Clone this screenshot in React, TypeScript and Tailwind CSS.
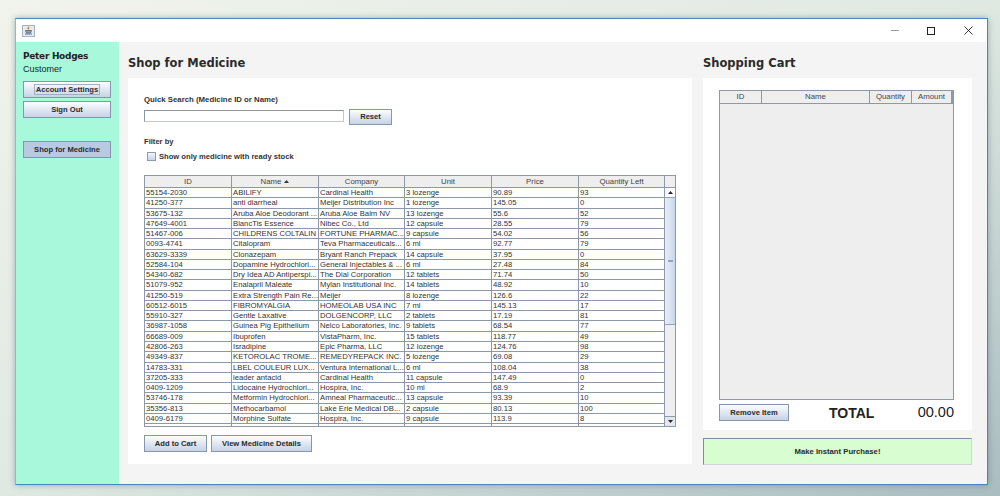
const rows = [
  ["55154-2030","ABILIFY","Cardinal Health","3 lozenge","90.89","93"],
  ["41250-377","anti diarrheal","Meijer Distribution Inc","1 lozenge","145.05","0"],
  ["53675-132","Aruba Aloe Deodorant ...","Aruba Aloe Balm NV","13 lozenge","55.6","52"],
  ["47649-4001","BlancTis Essence","Nibec Co., Ltd","12 capsule","28.55","79"],
  ["51467-006","CHILDRENS COLTALIN","FORTUNE PHARMAC...","9 capsule","54.02","56"],
  ["0093-4741","Citalopram","Teva Pharmaceuticals...","6 ml","92.77","79"],
  ["63629-3339","Clonazepam","Bryant Ranch Prepack","14 capsule","37.95","0"],
  ["52584-104","Dopamine Hydrochlori...","General Injectables & ...","6 ml","27.48","84"],
  ["54340-682","Dry Idea AD Antiperspi...","The Dial Corporation","12 tablets","71.74","50"],
  ["51079-952","Enalapril Maleate","Mylan Institutional Inc.","14 tablets","48.92","10"],
  ["41250-519","Extra Strength Pain Re...","Meijer","8 lozenge","126.6","22"],
  ["60512-6015","FIBROMYALGIA","HOMEOLAB USA INC","7 ml","145.13","17"],
  ["55910-327","Gentle Laxative","DOLGENCORP, LLC","2 tablets","17.19","81"],
  ["36987-1058","Guinea Pig Epithelium","Nelco Laboratories, Inc.","9 tablets","68.54","77"],
  ["66689-009","Ibuprofen","VistaPharm, Inc.","15 tablets","118.77","49"],
  ["42806-263","Isradipine","Epic Pharma, LLC","12 lozenge","124.76","98"],
  ["49349-837","KETOROLAC TROME...","REMEDYREPACK INC.","5 lozenge","69.08","29"],
  ["14783-331","LBEL COULEUR LUX...","Ventura International L...","6 ml","108.04","38"],
  ["37205-333","leader antacid","Cardinal Health","11 capsule","147.49","0"],
  ["0409-1209","Lidocaine Hydrochlori...","Hospira, Inc.","10 ml","68.9","2"],
  ["53746-178","Metformin Hydrochlori...","Amneal Pharmaceutic...","13 capsule","93.39","10"],
  ["35356-813","Methocarbamol","Lake Erie Medical DB...","2 capsule","80.13","100"],
  ["0409-6179","Morphine Sulfate","Hospira, Inc.","9 capsule","113.9","8"],
];
const widths = ["w-[87px]","w-[87px]","w-[86px]","w-[87px]","w-[87px]","w-[86px]"];
const heads = ["ID","Name","Company","Unit","Price","Quantity Left"];

function JButton({ label, className = "", focus = false }: { label: string; className?: string; focus?: boolean }) {
  return (
    <button className={`flex items-center justify-center border border-[#8497ad] bg-gradient-to-b from-[#fdfdff] to-[#c5d3e6] text-[7.6px] font-bold leading-none text-[#2a2a2a] ${className}`}>
      <span className={focus ? "border border-[#9fb0c6] px-[0.5px] py-[1px]" : ""}>{label}</span>
    </button>
  );
}

export default function App() {
  return (
    <div className="h-[496px] w-[1000px] overflow-hidden bg-gradient-to-br from-[#f1f4ec] via-[#dfe9e2] to-[#a9bcc0] pl-[15px] pt-[18px] font-['Liberation_Sans',sans-serif] text-[#333]">
      <div className="flex h-[467px] w-[973px] flex-col border border-[#4a84c4] border-l-[#7cc0d8] shadow-[0_0_6px_rgba(60,90,110,0.45)]">
        <div className="flex h-[23px] shrink-0 items-center justify-between bg-white pl-[6px]">
          <div className="flex h-[12px] w-[13px] items-center justify-center border border-[#a9b4c0] bg-[#e6e9ee]">
            <svg width="9" height="9" viewBox="0 0 9 9">
              <path d="M4.5 0.5v3M3 2.5l2-1" stroke="#d9822b" strokeWidth="1" fill="none" />
              <path d="M1.5 4.5h6l-1 2.5h-4zM1 8h7" stroke="#5f7590" strokeWidth="1" fill="#8ea2b8" />
            </svg>
          </div>
          <div className="flex items-center">
            <div className="flex w-[37px] justify-center"><div className="h-px w-[8px] bg-[#999]" /></div>
            <div className="flex w-[37px] justify-center pr-[2px]"><div className="h-[8px] w-[8px] border border-[#222]" /></div>
            <div className="flex w-[37px] justify-center pr-[1px]">
              <svg width="9" height="9" viewBox="0 0 9 9"><path d="M0.5 0.5l8 8M8.5 0.5l-8 8" stroke="#222" strokeWidth="0.9" /></svg>
            </div>
          </div>
        </div>
        <div className="flex min-h-0 flex-1">
          <aside className="w-[103px] shrink-0 bg-[#a8f9dc] pl-[7px] pt-[8px]">
            <div className="font-['DejaVu_Sans',sans-serif] text-[9px] font-bold leading-[12px] tracking-[-0.3px] text-[#222]">Peter Hodges</div>
            <div className="mt-[1px] text-[9px] leading-[12px] text-[#222]">Customer</div>
            <JButton label="Account Settings" focus className="mt-[6px] h-[17px] w-[88px]" />
            <JButton label="Sign Out" className="mt-[3px] h-[17px] w-[88px]" />
            <button className="mt-[23px] flex h-[17px] w-[88px] items-center justify-center border border-[#8497ad] bg-[#b8c9e2] text-[7.6px] font-bold leading-none text-[#2a2a2a]">Shop for Medicine</button>
          </aside>
          <main className="flex min-w-0 flex-1 bg-[#f4f4f4] pl-[9px]">
            <section className="w-[564px] shrink-0">
              <h1 className="mt-[14px] font-['DejaVu_Sans',sans-serif] text-[11.5px] font-bold leading-[15px] text-[#2b2b2b]">Shop for Medicine</h1>
              <div className="mt-[7px] h-[386px] bg-white pl-[16px] pt-[17px]">
                <div className="text-[7.8px] font-bold leading-[9px] text-[#333]">Quick Search (Medicine ID or Name)</div>
                <div className="mt-[5px] flex items-start gap-[5px]">
                  <div className="mt-[1px] h-[12px] w-[200px] border border-[#c3c9d0] border-l-[#8b95a3] border-t-[#8b95a3] bg-white" />
                  <JButton label="Reset" className="h-[16px] w-[43px]" />
                </div>
                <div className="mt-[12px] text-[7.6px] font-bold leading-[9px] text-[#333]">Filter by</div>
                <div className="mt-[6px] flex h-[9px] items-center pl-[3px]">
                  <div className="h-[9px] w-[9px] border border-[#8f9cad] bg-gradient-to-b from-[#f2f5f9] to-[#c9d5e5]" />
                  <span className="ml-[3px] text-[7.6px] font-bold leading-none text-[#333]">Show only medicine with ready stock</span>
                </div>
                <div className="mt-[14px] w-[532px] border border-[#8d99ab]">
                  <div className="flex h-[12px] border-b border-[#8d99ab] bg-[#eeeeee]">
                    {heads.map((h, i) => (
                      <div key={h} className={`${widths[i]} flex shrink-0 items-center justify-center gap-[3px] border-r border-[#8d99ab] text-[7.8px] leading-none text-[#444]`}>
                        {h}
                        {h === "Name" && <svg width="5" height="3" viewBox="0 0 5 3"><path d="M0 3L2.5 0L5 3z" fill="#333" /></svg>}
                      </div>
                    ))}
                    <div className="flex-1" />
                  </div>
                  <div className="flex h-[238px]">
                    <div className="w-[520px] shrink-0 overflow-hidden">
                      {rows.map((r) => (
                        <div key={r[0]} className="flex h-[10.28px] border-b border-[#8d99ab]">
                          {r.map((c, i) => (
                            <div key={i} className={`${widths[i]} shrink-0 whitespace-nowrap border-r border-[#8d99ab] pl-[1px] text-[7.7px] leading-[9.2px] text-[#333]`}>{c}</div>
                          ))}
                        </div>
                      ))}
                      <div className="flex h-[3px]">
                        {widths.map((w, i) => <div key={i} className={`${w} shrink-0 border-r border-[#8d99ab]`} />)}
                      </div>
                    </div>
                    <div className="flex w-[10px] flex-col bg-[#eeeeee]">
                      <div className="flex h-[10px] items-center justify-center border-b border-[#8ea5c8] bg-white">
                        <svg width="5" height="3" viewBox="0 0 5 3"><path d="M0 3L2.5 0L5 3z" fill="#222" /></svg>
                      </div>
                      <div className="flex h-[127px] items-center justify-center border-b border-[#8ea5c8] bg-gradient-to-r from-[#e8eef7] to-[#c9d6ea]">
                        <div className="h-[1.5px] w-[5px] bg-[#8ea5c8]" />
                      </div>
                      <div className="flex-1" />
                      <div className="flex h-[10px] items-center justify-center border-t border-[#8d99ab] bg-[#e4e8ee]">
                        <svg width="5" height="3" viewBox="0 0 5 3"><path d="M0 0L2.5 3L5 0z" fill="#222" /></svg>
                      </div>
                    </div>
                  </div>
                </div>
                <div className="mt-[8px] flex gap-[4px]">
                  <JButton label="Add to Cart" className="h-[17px] w-[63px]" />
                  <JButton label="View Medicine Details" className="h-[17px] w-[101px]" />
                </div>
              </div>
            </section>
            <section className="ml-[11px] w-[269px] shrink-0">
              <h1 className="mt-[14px] font-['DejaVu_Sans',sans-serif] text-[11.5px] font-bold leading-[15px] text-[#2b2b2b]">Shopping Cart</h1>
              <div className="mt-[7px] h-[352px] bg-white pl-[16px] pt-[12px]">
                <div className="flex h-[310px] w-[235px] flex-col border border-[#8d99ab] bg-[#eeeeee]">
                  <div className="flex h-[13px] shrink-0 border-b border-[#8d99ab] text-[7.8px] leading-none text-[#444]">
                    <div className="flex w-[42px] items-center justify-center border-r border-[#8d99ab]">ID</div>
                    <div className="flex w-[108px] items-center justify-center border-r border-[#8d99ab]">Name</div>
                    <div className="flex w-[42px] items-center justify-center border-r border-[#8d99ab]">Quantity</div>
                    <div className="flex w-[41px] items-center justify-center border-r-2 border-[#8d99ab]">Amount</div>
                  </div>
                </div>
                <div className="mt-[4px] flex w-[235px] items-center">
                  <JButton label="Remove Item" className="h-[17px] w-[70px]" />
                  <div className="ml-[40px] text-[14px] font-bold leading-none text-[#222]">TOTAL</div>
                  <div className="ml-auto text-[14.5px] leading-none text-[#222]">00.00</div>
                </div>
              </div>
              <button className="mt-[8px] flex h-[27px] w-[269px] items-center justify-center border border-[#d0d4d8] border-l-[#7f8e9e] border-t-[#7f8e9e] bg-[#d8fdd0] text-[7.7px] font-bold leading-none text-[#2a2a2a]">Make Instant Purchase!</button>
            </section>
          </main>
        </div>
      </div>
    </div>
  );
}
